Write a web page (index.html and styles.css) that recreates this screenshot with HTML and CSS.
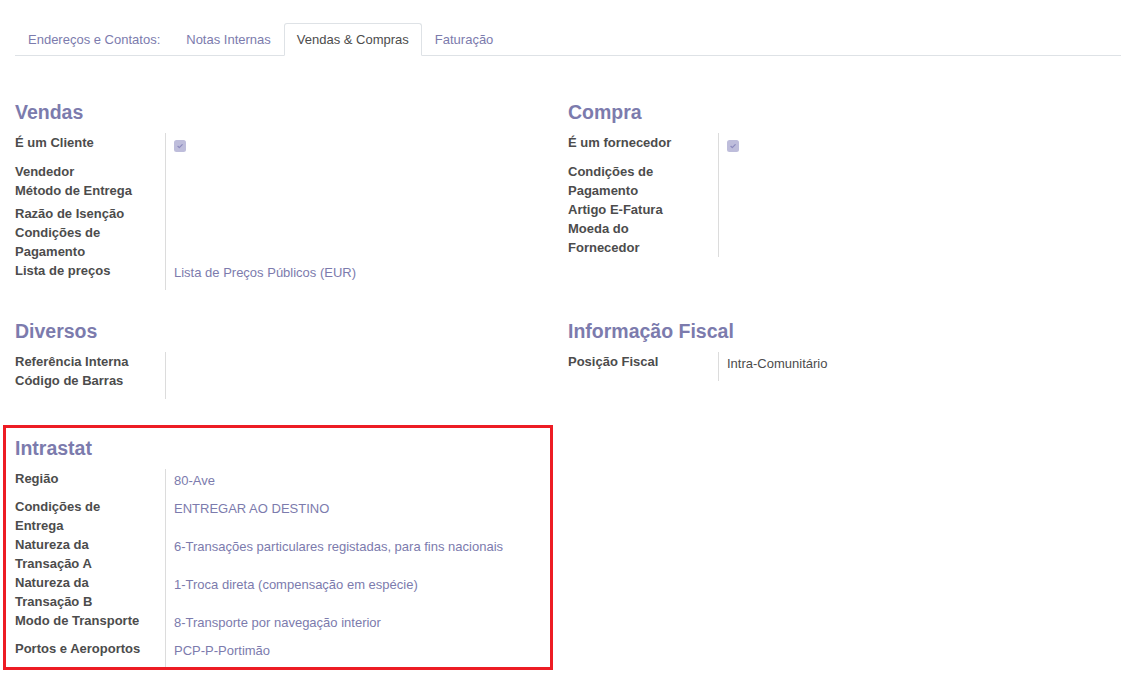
FILE: index.html
```html
<!DOCTYPE html>
<html lang="pt">
<head>
<meta charset="utf-8">
<title>Vendas &amp; Compras</title>
<link rel="stylesheet" href="styles.css">
</head>
<body>
<div class="page">
  <ul class="tabs">
    <li class="tab">Endereços e Contatos:</li>
    <li class="tab">Notas Internas</li>
    <li class="tab active">Vendas &amp; Compras</li>
    <li class="tab">Faturação</li>
  </ul>

  <div class="groups">
    <section class="group">
      <h2 class="group-title">Vendas</h2>
      <div class="fields">
        <div class="field h29">
          <div class="label">É um Cliente</div>
          <div class="value"><svg class="check" width="12" height="12" viewBox="0 0 12 12"><rect x="0" y="0" width="12" height="12" rx="2.5" fill="#bebddb"/><path d="M3.9 6.3 L5.3 7.6 L8.2 4.7" fill="none" stroke="#8c8abd" stroke-width="1.2" stroke-linecap="round" stroke-linejoin="round"/></svg></div>
        </div>
        <div class="field"><div class="label">Vendedor</div><div class="value empty"></div></div>
        <div class="field h23"><div class="label">Método de Entrega</div><div class="value empty"></div></div>
        <div class="field"><div class="label">Razão de Isenção</div><div class="value empty"></div></div>
        <div class="field"><div class="label">Condições de Pagamento</div><div class="value empty"></div></div>
        <div class="field h29"><div class="label">Lista de preços</div><div class="value">Lista de Preços Públicos (EUR)</div></div>
      </div>
    </section>

    <section class="group">
      <h2 class="group-title">Compra</h2>
      <div class="fields">
        <div class="field h29">
          <div class="label">É um fornecedor</div>
          <div class="value"><svg class="check" width="12" height="12" viewBox="0 0 12 12"><rect x="0" y="0" width="12" height="12" rx="2.5" fill="#bebddb"/><path d="M3.9 6.3 L5.3 7.6 L8.2 4.7" fill="none" stroke="#8c8abd" stroke-width="1.2" stroke-linecap="round" stroke-linejoin="round"/></svg></div>
        </div>
        <div class="field"><div class="label">Condições de Pagamento</div><div class="value empty"></div></div>
        <div class="field"><div class="label">Artigo E-Fatura</div><div class="value empty"></div></div>
        <div class="field"><div class="label">Moeda do Fornecedor</div><div class="value empty"></div></div>
      </div>
    </section>

    <section class="group">
      <h2 class="group-title">Diversos</h2>
      <div class="fields">
        <div class="field"><div class="label">Referência Interna</div><div class="value empty"></div></div>
        <div class="field h28"><div class="label">Código de Barras</div><div class="value empty"></div></div>
      </div>
    </section>

    <section class="group">
      <h2 class="group-title">Informação Fiscal</h2>
      <div class="fields">
        <div class="field h29"><div class="label">Posição Fiscal</div><div class="value plain">Intra-Comunitário</div></div>
      </div>
    </section>

    <section class="group highlight">
      <h2 class="group-title">Intrastat</h2>
      <div class="fields">
        <div class="field h28"><div class="label">Região</div><div class="value">80-Ave</div></div>
        <div class="field"><div class="label">Condições de Entrega</div><div class="value">ENTREGAR AO DESTINO</div></div>
        <div class="field"><div class="label">Natureza da Transação A</div><div class="value">6-Transações particulares registadas, para fins nacionais</div></div>
        <div class="field"><div class="label">Natureza da Transação B</div><div class="value">1-Troca direta (compensação em espécie)</div></div>
        <div class="field h28"><div class="label">Modo de Transporte</div><div class="value">8-Transporte por navegação interior</div></div>
        <div class="field h28"><div class="label">Portos e Aeroportos</div><div class="value">PCP-P-Portimão</div></div>
      </div>
    </section>
  </div>
</div>
</body>
</html>
```

FILE: styles.css
```css
* {
  box-sizing: border-box;
}

body {
  margin: 0;
  background: #ffffff;
  color: #4c4c4c;
  font-family: "Liberation Sans", Arial, sans-serif;
  font-size: 13px;
  line-height: 19px;
}

.page {
  padding: 0 16px 0 15px;
}

/* Tabs */
.tabs {
  list-style: none;
  margin: 23px 0 0;
  padding: 0;
  display: flex;
  border-bottom: 1px solid #dee2e6;
}

.tab {
  padding: 6px 12px;
  margin-bottom: -1px;
  border: 1px solid transparent;
  border-radius: 3px 3px 0 0;
  color: #7c7bad;
  white-space: nowrap;
}

.tab.active {
  color: #4c4c4c;
  background: #ffffff;
  border-color: #dee2e6 #dee2e6 #ffffff;
}

/* Groups */
.groups {
  display: grid;
  grid-template-columns: 1fr 1fr;
  row-gap: 29px;
  margin-top: 44px;
  align-items: start;
}

.group-title {
  margin: 0 0 9px;
  font-size: 19.5px;
  line-height: 24px;
  font-weight: bold;
  color: #7c7bad;
}

.fields {
  display: flex;
  flex-direction: column;
}

.field {
  display: flex;
  min-height: 19px;
}

.field.h23 { min-height: 23px; }
.field.h28 { min-height: 28px; }
.field.h29 { min-height: 29px; }

.label {
  flex: 0 0 151px;
  width: 151px;
  padding-right: 20px;
  border-right: 1px solid #dcdcdc;
  font-weight: bold;
  color: #4c4c4c;
}

.value {
  flex: 1 1 auto;
  padding: 2px 0 0 8px;
  color: #7c7bad;
}

.value.plain {
  color: #4c4c4c;
}

.value.empty {
  padding: 0;
}

.check {
  display: block;
  margin-top: 5px;
}

/* Highlighted (annotated) group */
.highlight {
  grid-column: 1;
  width: 550px;
  margin-top: -3px;
  margin-left: -12px;
  padding: 8px 0 0 9px;
  border: 3px solid #ed1c24;
}
```
